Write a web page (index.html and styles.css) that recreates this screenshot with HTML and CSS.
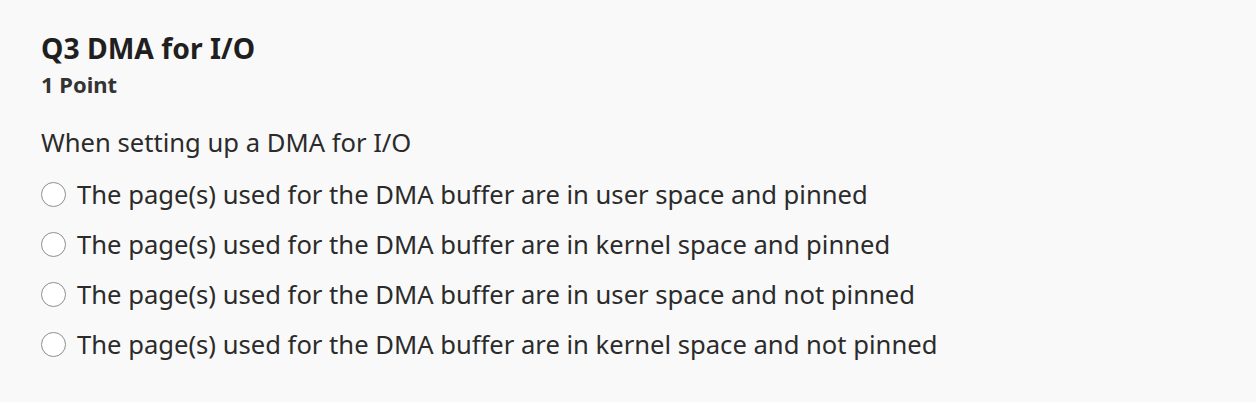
FILE: index.html
```html
<!DOCTYPE html>
<html>
<head>
<meta charset="utf-8">
<link rel="stylesheet" href="styles.css">
</head>
<body>
<div class="question">
  <h2 class="q-title">Q3 DMA for I/O</h2>
  <div class="q-points">1 Point</div>
  <p class="q-prompt">When setting up a DMA for I/O</p>
  <ul class="options">
    <li class="option"><span class="radio"></span><span class="label">The page(s) used for the DMA buffer are in user space and pinned</span></li>
    <li class="option"><span class="radio"></span><span class="label">The page(s) used for the DMA buffer are in kernel space and pinned</span></li>
    <li class="option"><span class="radio"></span><span class="label">The page(s) used for the DMA buffer are in user space and not pinned</span></li>
    <li class="option"><span class="radio"></span><span class="label">The page(s) used for the DMA buffer are in kernel space and not pinned</span></li>
  </ul>
</div>
</body>
</html>
```

FILE: styles.css
```css
html, body {
  margin: 0;
  padding: 0;
  background: #f9f9f9;
}
body {
  font-family: "Noto Sans", "Open Sans", sans-serif;
  color: #2b2b2b;
}
.question {
  padding: 30px 41px;
}
.q-title {
  margin: 0;
  font-size: 28.3px;
  font-weight: 700;
  line-height: 36px;
  color: #1f1f1f;
}
.q-points {
  margin-top: 3px;
  font-size: 22px;
  font-weight: 700;
  line-height: 30px;
  color: #333;
}
.q-prompt {
  margin: 26px 0 0;
  font-size: 25.6px;
  line-height: 36px;
}
.options {
  list-style: none;
  margin: 8px 0 0;
  padding: 0;
}
.option {
  display: flex;
  align-items: center;
  gap: 11px;
  height: 50px;
  font-size: 25.6px;
}
.radio {
  box-sizing: border-box;
  width: 25px;
  height: 25px;
  border-radius: 50%;
  border: 1.5px solid #8e8e8e;
  background: #fff;
  flex: none;
}
```
